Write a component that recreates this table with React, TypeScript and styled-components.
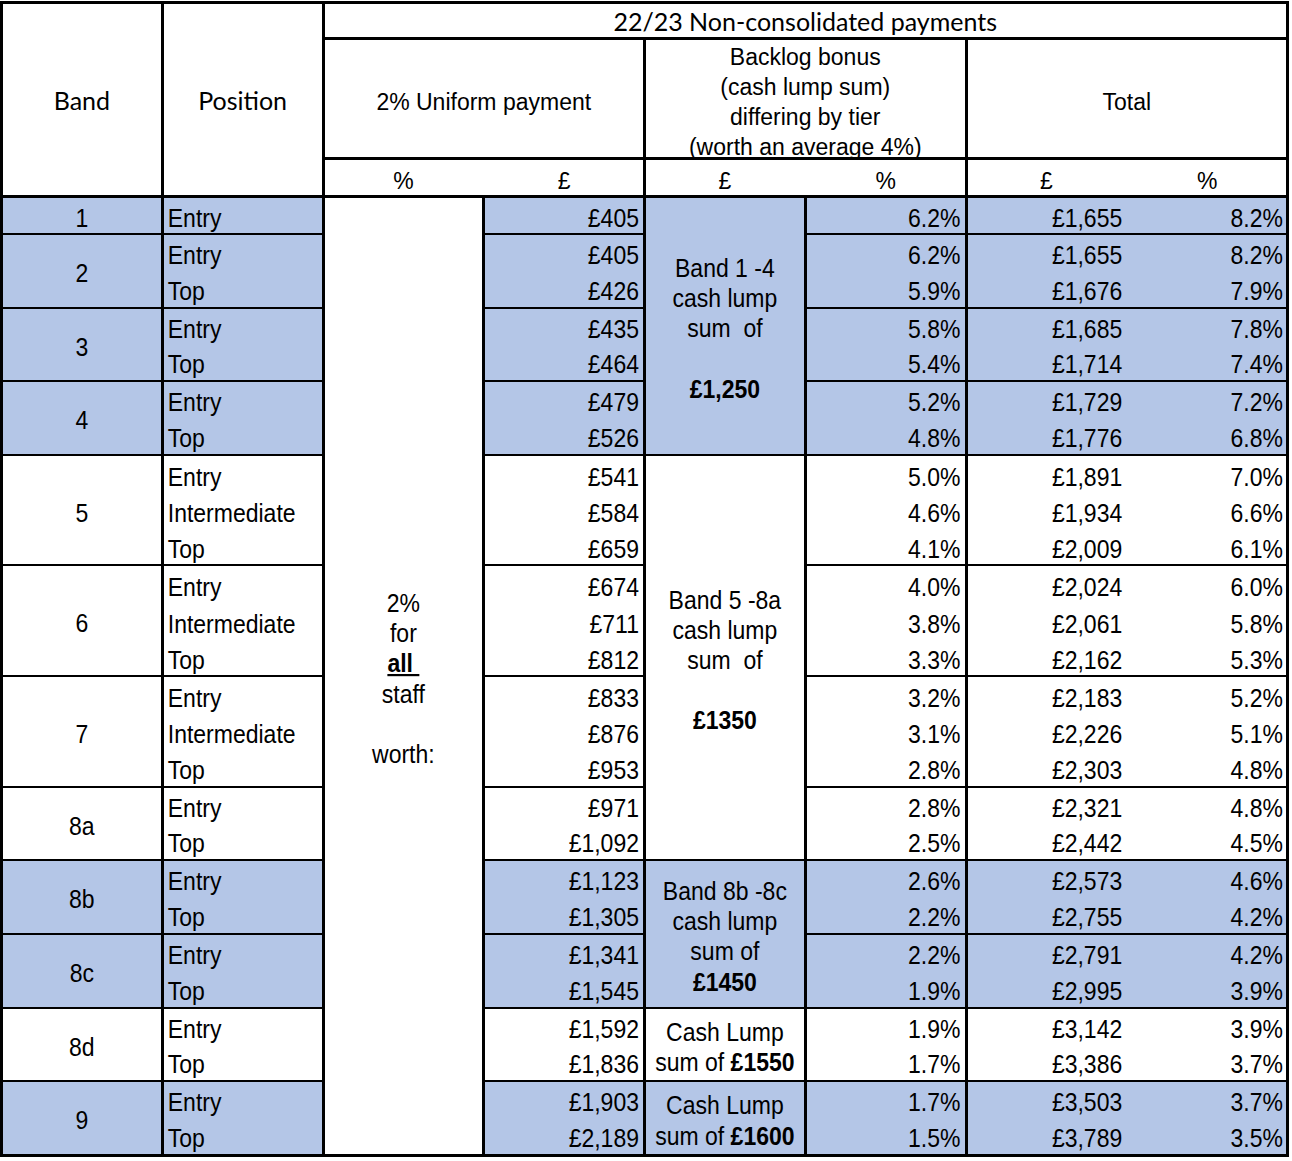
import styled, { createGlobalStyle } from 'styled-components';

const BLUE = '#b4c6e7';
const SUB_ROW = 36.85;
const ROW_GAP = 2;

type Line = [string, string, string, string, string];

interface Band {
  band: string;
  blue: boolean;
  rows: Line[];
}

interface Lump {
  first: number;
  last: number;
  blue: boolean;
  lines: React.ReactNode[];
}

const bands: Band[] = [
  { band: '1', blue: true, rows: [['Entry', '£405', '6.2%', '£1,655', '8.2%']] },
  {
    band: '2',
    blue: true,
    rows: [
      ['Entry', '£405', '6.2%', '£1,655', '8.2%'],
      ['Top', '£426', '5.9%', '£1,676', '7.9%'],
    ],
  },
  {
    band: '3',
    blue: true,
    rows: [
      ['Entry', '£435', '5.8%', '£1,685', '7.8%'],
      ['Top', '£464', '5.4%', '£1,714', '7.4%'],
    ],
  },
  {
    band: '4',
    blue: true,
    rows: [
      ['Entry', '£479', '5.2%', '£1,729', '7.2%'],
      ['Top', '£526', '4.8%', '£1,776', '6.8%'],
    ],
  },
  {
    band: '5',
    blue: false,
    rows: [
      ['Entry', '£541', '5.0%', '£1,891', '7.0%'],
      ['Intermediate', '£584', '4.6%', '£1,934', '6.6%'],
      ['Top', '£659', '4.1%', '£2,009', '6.1%'],
    ],
  },
  {
    band: '6',
    blue: false,
    rows: [
      ['Entry', '£674', '4.0%', '£2,024', '6.0%'],
      ['Intermediate', '£711', '3.8%', '£2,061', '5.8%'],
      ['Top', '£812', '3.3%', '£2,162', '5.3%'],
    ],
  },
  {
    band: '7',
    blue: false,
    rows: [
      ['Entry', '£833', '3.2%', '£2,183', '5.2%'],
      ['Intermediate', '£876', '3.1%', '£2,226', '5.1%'],
      ['Top', '£953', '2.8%', '£2,303', '4.8%'],
    ],
  },
  {
    band: '8a',
    blue: false,
    rows: [
      ['Entry', '£971', '2.8%', '£2,321', '4.8%'],
      ['Top', '£1,092', '2.5%', '£2,442', '4.5%'],
    ],
  },
  {
    band: '8b',
    blue: true,
    rows: [
      ['Entry', '£1,123', '2.6%', '£2,573', '4.6%'],
      ['Top', '£1,305', '2.2%', '£2,755', '4.2%'],
    ],
  },
  {
    band: '8c',
    blue: true,
    rows: [
      ['Entry', '£1,341', '2.2%', '£2,791', '4.2%'],
      ['Top', '£1,545', '1.9%', '£2,995', '3.9%'],
    ],
  },
  {
    band: '8d',
    blue: false,
    rows: [
      ['Entry', '£1,592', '1.9%', '£3,142', '3.9%'],
      ['Top', '£1,836', '1.7%', '£3,386', '3.7%'],
    ],
  },
  {
    band: '9',
    blue: true,
    rows: [
      ['Entry', '£1,903', '1.7%', '£3,503', '3.7%'],
      ['Top', '£2,189', '1.5%', '£3,789', '3.5%'],
    ],
  },
];

const lumps: Lump[] = [
  {
    first: 0,
    last: 3,
    blue: true,
    lines: ['Band 1 -4', 'cash lump', 'sum\u00a0\u00a0of', '', <b key="b">£1,250</b>],
  },
  {
    first: 4,
    last: 7,
    blue: false,
    lines: ['Band 5 -8a', 'cash lump', 'sum\u00a0\u00a0of', '', <b key="b">£1350</b>],
  },
  {
    first: 8,
    last: 9,
    blue: true,
    lines: ['Band 8b -8c', 'cash lump', 'sum of', <b key="b">£1450</b>],
  },
  {
    first: 10,
    last: 10,
    blue: false,
    lines: ['Cash Lump', <span key="s">sum of <b>£1550</b></span>],
  },
  {
    first: 11,
    last: 11,
    blue: true,
    lines: ['Cash Lump', <span key="s">sum of <b>£1600</b></span>],
  },
];

const HEADER_ROWS = 3;
const bandRows = bands
  .map((b) => `${(b.rows.length * SUB_ROW - ROW_GAP).toFixed(2)}px`)
  .join(' ');

const GlobalStyle = createGlobalStyle`
  body {
    margin: 0;
    background: #ffffff;
    font-family: "Liberation Sans", Arial, sans-serif;
    color: #000000;
  }
`;

const Sheet = styled.div`
  display: grid;
  box-sizing: border-box;
  width: 1289px;
  margin-top: 1px;
  padding: 3px;
  grid-template-columns: repeat(8, 1fr);
  grid-template-rows: 34px 118px 36px ${bandRows};
  column-gap: 3px;
  row-gap: ${ROW_GAP}px;
  background: #000000;
`;

const Cell = styled.div<{ $area: string; $blue?: boolean }>`
  grid-area: ${(p) => p.$area};
  box-sizing: border-box;
  min-width: 0;
  background: ${(p) => (p.$blue ? BLUE : '#ffffff')};
  font-family: "Liberation Sans", Arial, sans-serif;
  font-size: 23px;
`;

/* excel text in the sheet renders a little taller than plain arial */
const stretched = `
  transform: translateY(3px) scaleY(1.1);
`;

const HeadCell = styled(Cell)<{ $calibri?: boolean }>`
  display: flex;
  flex-direction: column;
  align-items: center;
  justify-content: center;
  text-align: center;
  border-bottom: 1px solid #000000;
  padding-top: ${(p) => (p.$calibri ? '0' : '5px')};
  font-family: ${(p) =>
    p.$calibri ? '"Lato", "Noto Sans", sans-serif' : '"Liberation Sans", Arial, sans-serif'};
  font-size: ${(p) => (p.$calibri ? '25px' : '23px')};
  line-height: 30px;

  & > div {
    ${(p) => (p.$calibri ? '' : 'transform: scaleY(1.08);')}
  }
`;

const SplitHead = styled(Cell)`
  display: grid;
  grid-template-columns: 1fr 1fr;
  column-gap: 3px;
  align-items: center;
  text-align: center;
  padding-top: 6px;
  border-bottom: 1px solid #000000;

  & > span {
    transform: scaleY(1.08);
  }
`;

const Stack = styled(Cell)`
  display: flex;
  flex-direction: column;
`;

const SubRow = styled.div<{ $align: 'left' | 'center' | 'right' }>`
  flex: 1;
  display: flex;
  align-items: center;
  justify-content: ${(p) =>
    p.$align === 'left' ? 'flex-start' : p.$align === 'right' ? 'flex-end' : 'center'};
  padding: 0 4px 0 4px;
  white-space: nowrap;
  ${stretched}
`;

const TotalRow = styled.div`
  flex: 1;
  display: grid;
  grid-template-columns: 1fr 1fr;
  column-gap: 3px;
  align-items: center;
  text-align: right;
  ${stretched}

  & > span {
    padding-right: 3px;
  }
`;

const Note = styled(Cell)`
  display: flex;
  flex-direction: column;
  align-items: center;
  justify-content: center;
  text-align: center;
  padding-top: 5px;
  line-height: 30.2px;
  white-space: nowrap;
`;

const NoteLine = styled.div`
  min-height: 30.2px;
  transform: scaleY(1.1);
`;

const AllStaff = styled.span`
  font-weight: bold;
  text-decoration: underline;
`;

const rowOf = (index: number) => HEADER_ROWS + 1 + index;

export default function App() {
  return (
    <>
      <GlobalStyle />
      <Sheet>
        <HeadCell $area="1 / 1 / 4 / 2" $calibri>
          Band
        </HeadCell>
        <HeadCell $area="1 / 2 / 4 / 3" $calibri>
          Position
        </HeadCell>
        <HeadCell $area="1 / 3 / 2 / 9" $calibri>
          22/23 Non-consolidated payments
        </HeadCell>
        <HeadCell $area="2 / 3 / 3 / 5">
          <div>2% Uniform payment</div>
        </HeadCell>
        <HeadCell $area="2 / 5 / 3 / 7">
          <div>Backlog bonus</div>
          <div>(cash lump sum)</div>
          <div>differing by tier</div>
          <div>(worth an average 4%)</div>
        </HeadCell>
        <HeadCell $area="2 / 7 / 3 / 9">
          <div>Total</div>
        </HeadCell>
        <SplitHead $area="3 / 3 / 4 / 5">
          <span>%</span>
          <span>£</span>
        </SplitHead>
        <SplitHead $area="3 / 5 / 4 / 7">
          <span>£</span>
          <span>%</span>
        </SplitHead>
        <SplitHead $area="3 / 7 / 4 / 9">
          <span>£</span>
          <span>%</span>
        </SplitHead>

        <Note $area={`${rowOf(0)} / 3 / ${rowOf(bands.length)} / 4`}>
          <NoteLine>2%</NoteLine>
          <NoteLine>for</NoteLine>
          <NoteLine>
            <AllStaff>all&nbsp;</AllStaff>
          </NoteLine>
          <NoteLine>staff</NoteLine>
          <NoteLine />
          <NoteLine>worth:</NoteLine>
        </Note>

        {lumps.map((l) => (
          <Note
            key={l.first}
            $blue={l.blue}
            $area={`${rowOf(l.first)} / 5 / ${rowOf(l.last + 1)} / 6`}
          >
            {l.lines.map((line, i) => (
              <NoteLine key={i}>{line}</NoteLine>
            ))}
          </Note>
        ))}

        {bands.map((b, i) => {
          const r = rowOf(i);
          return [
            <Stack key={`band-${b.band}`} $blue={b.blue} $area={`${r} / 1 / ${r + 1} / 2`}>
              <SubRow $align="center">{b.band}</SubRow>
            </Stack>,
            <Stack key={`pos-${b.band}`} $blue={b.blue} $area={`${r} / 2 / ${r + 1} / 3`}>
              {b.rows.map((row) => (
                <SubRow key={row[0]} $align="left">
                  {row[0]}
                </SubRow>
              ))}
            </Stack>,
            <Stack key={`uni-${b.band}`} $blue={b.blue} $area={`${r} / 4 / ${r + 1} / 5`}>
              {b.rows.map((row) => (
                <SubRow key={row[0]} $align="right">
                  {row[1]}
                </SubRow>
              ))}
            </Stack>,
            <Stack key={`pct-${b.band}`} $blue={b.blue} $area={`${r} / 6 / ${r + 1} / 7`}>
              {b.rows.map((row) => (
                <SubRow key={row[0]} $align="right">
                  {row[2]}
                </SubRow>
              ))}
            </Stack>,
            <Stack key={`tot-${b.band}`} $blue={b.blue} $area={`${r} / 7 / ${r + 1} / 9`}>
              {b.rows.map((row) => (
                <TotalRow key={row[0]}>
                  <span>{row[3]}</span>
                  <span>{row[4]}</span>
                </TotalRow>
              ))}
            </Stack>,
          ];
        })}
      </Sheet>
    </>
  );
}
